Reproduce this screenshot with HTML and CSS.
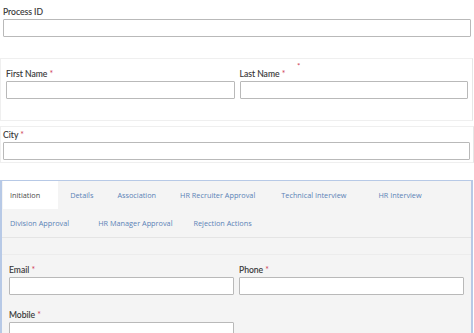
FILE: index.html
```html
<!DOCTYPE html>
<html>
<head>
<meta charset="utf-8">
<link rel="stylesheet" href="styles.css">
</head>
<body>
<div class="field top-field">
  <label class="lbl">Process ID</label>
  <input class="inp" type="text">
</div>

<div class="card names">
  <span class="stray">*</span>
  <div class="grid2">
    <div class="field">
      <label class="lbl">First Name <span class="req">*</span></label>
      <input class="inp" type="text">
    </div>
    <div class="field">
      <label class="lbl">Last Name <span class="req">*</span></label>
      <input class="inp" type="text">
    </div>
  </div>
</div>

<div class="card city">
  <div class="field">
    <label class="lbl">City <span class="req">*</span></label>
    <input class="inp" type="text">
  </div>
</div>

<div class="tabs">
  <div class="tabbar">
    <div class="tabrow">
      <span class="tab active">Initiation</span>
      <span class="tab">Details</span>
      <span class="tab">Association</span>
      <span class="tab">HR Recruiter Approval</span>
      <span class="tab spaced-xs">Technical Interview</span>
      <span class="tab spaced">HR Interview</span>
    </div>
    <div class="tabrow">
      <span class="tab">Division Approval</span>
      <span class="tab spaced-sm">HR Manager Approval</span>
      <span class="tab tight">Rejection Actions</span>
    </div>
  </div>
  <div class="panel">
    <div class="grid2 panel-grid">
      <div class="field">
        <label class="lbl">Email <span class="req">*</span></label>
        <input class="inp" type="text">
      </div>
      <div class="field">
        <label class="lbl">Phone <span class="req">*</span></label>
        <input class="inp" type="text">
      </div>
      <div class="field">
        <label class="lbl">Mobile <span class="req">*</span></label>
        <input class="inp" type="text">
      </div>
    </div>
  </div>
</div>
</body>
</html>
```

FILE: styles.css
```css
html, body {
  margin: 0;
  padding: 0;
  background: #ffffff;
  font-family: Lato, "Liberation Sans", sans-serif;
  overflow: hidden;
}
body {
  width: 474px;
  height: 333px;
}
.field {
  display: flex;
  flex-direction: column;
}
.lbl {
  font-size: 8.6px;
  font-weight: 400;
  -webkit-text-stroke: 0.12px #333;
  color: #333;
  line-height: 12px;
  height: 12px;
  margin-bottom: 1px;
}
.req {
  color: #d0455a;
  -webkit-text-stroke: 0;
  font-weight: 400;
}
.inp {
  box-sizing: border-box;
  height: 18px;
  border: 1px solid #b9b9b9;
  border-radius: 1px;
  background: #fff;
  margin: 0;
  padding: 0 4px;
  outline: none;
}
.top-field {
  padding: 6px 3px 0 3px;
}
.card {
  border: 1px solid #efefef;
  border-right-color: #e6e6e6;
  background: #fff;
  position: relative;
}
.names {
  margin-top: 21px;
  padding: 9px 4px 21px 5px;
  width: 473px;
  box-sizing: border-box;
}
.grid2 {
  display: grid;
  grid-template-columns: 1fr 1fr;
  column-gap: 5px;
}
.stray {
  position: absolute;
  left: 296px;
  top: 3px;
  color: #d0455a;
  font-size: 8px;
  line-height: 8px;
}
.city {
  margin-top: 5px;
  padding: 2px 3px 2px 2px;
  width: 474px;
  box-sizing: border-box;
}
.tabs {
  margin-top: 17px;
  width: 473px;
  box-sizing: border-box;
  border-top: 1px solid #b7c9e6;
  border-left: 2px solid #b7c9e6;
  border-right: 2px solid #b7c9e6;
  background: #f4f4f4;
  height: 160px;
}
.tabbar {
  font-family: "Open Sans", "Noto Sans", sans-serif;
  font-size: 7.3px;
  border-bottom: 1px solid #e4e4e4;
}
.tabrow {
  display: flex;
  height: 28px;
  align-items: stretch;
}
.tab {
  display: flex;
  align-items: center;
  padding: 0 12px;
  color: #5a82b6;
}
.tab:first-child {
  padding-left: 8px;
}
.tab.spaced-xs {
  margin-left: 2px;
}
.tab.spaced {
  margin-left: 8px;
}
.tab.spaced-sm {
  margin-left: 5px;
}
.tab.tight {
  margin-left: -3px;
}
.tab.active {
  background: #ffffff;
  color: #4a4a4a;
  padding: 0 18px 0 7px;
  margin-left: 1px;
}
.panel {
  border-top: 1px solid #ececec;
  margin-top: 16px;
  padding: 9px 7px 0 7px;
}
.panel-grid {
  row-gap: 14px;
}
```
